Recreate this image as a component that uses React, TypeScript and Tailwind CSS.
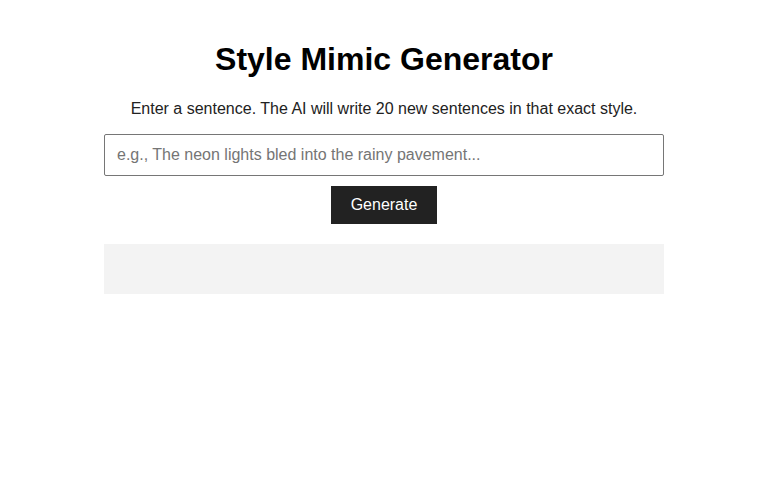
export default function App() {
  return (
    <div className="min-h-screen bg-white pt-5 font-['Liberation_Sans',Arial,sans-serif] text-black">
      <div className="mx-auto flex w-[560px] flex-col items-center">
        <h1 className="mt-[21px] text-[32px] font-bold leading-[37px]">Style Mimic Generator</h1>
        <p className="mt-[22px] text-base leading-[18px] text-[#222]">
          Enter a sentence. The AI will write 20 new sentences in that exact style.
        </p>
        <input
          type="text"
          placeholder="e.g., The neon lights bled into the rainy pavement..."
          className="mt-4 box-border h-[42px] w-full rounded-[2px] border border-[#767676] px-3 text-base leading-[18px] placeholder:text-[#757575] outline-none"
        />
        <button className="mt-[10px] h-[38px] bg-[#222222] px-5 text-base text-white">Generate</button>
        <div className="mt-5 h-[50px] w-full bg-[#f3f3f3]"></div>
      </div>
    </div>
  );
}
